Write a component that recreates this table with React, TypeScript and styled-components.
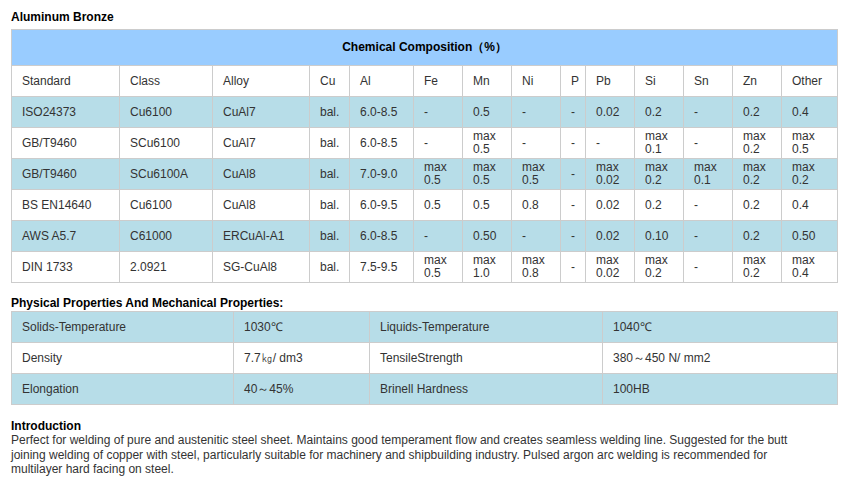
import React from "react";
import styled, { createGlobalStyle } from "styled-components";

const Global = createGlobalStyle`
  html, body { margin: 0; padding: 0; background: #fff; }
  body { font-family: "Liberation Sans", Arial, sans-serif; font-size: 12px; color: #333; }
`;

const Page = styled.div`
  width: 826px;
  padding: 10px 0 0 11px;
`;

const SectionTitle = styled.div<{ $gap?: number; $after?: number }>`
  font-weight: bold;
  color: #000;
  font-size: 12px;
  line-height: 15px;
  margin-top: ${(p) => p.$gap ?? 0}px;
  margin-bottom: ${(p) => p.$after ?? 4}px;
`;

const Table = styled.table`
  width: 826px;
  border-collapse: collapse;
  table-layout: fixed;
  font-size: 12px;
  color: #333;
`;

const Row = styled.tr<{ $shade?: boolean }>`
  background: ${(p) => (p.$shade ? "#b7dde8" : "#ffffff")};
`;

const HeadCell = styled.td`
  background: #99ccff;
  border: 1px solid #cccccc;
  height: 35px;
  padding: 0;
  text-align: center;
  font-weight: bold;
  color: #000;
`;

const Cell = styled.td<{ $h?: number }>`
  border: 1px solid #cccccc;
  height: ${(p) => p.$h ?? 30}px;
  padding: 0 0 0 10px;
  vertical-align: middle;
  line-height: 13px;
  white-space: nowrap;
`;

const Intro = styled.div`
  margin-top: 14px;
  width: 810px;
`;

const IntroTitle = styled.div`
  font-weight: bold;
  color: #000;
  line-height: 14px;
`;

const IntroText = styled.p`
  margin: 0;
  line-height: 14.5px;
  color: #333;
`;

const chemCols = [108, 93, 97, 40, 64, 49, 49, 49, 25, 49, 49, 49, 49, 56];
const chemHead = ["Standard", "Class", "Alloy", "Cu", "Al", "Fe", "Mn", "Ni", "P", "Pb", "Si", "Sn", "Zn", "Other"];
const chemRows: string[][] = [
  ["ISO24373", "Cu6100", "CuAl7", "bal.", "6.0-8.5", "-", "0.5", "-", "-", "0.02", "0.2", "-", "0.2", "0.4"],
  ["GB/T9460", "SCu6100", "CuAl7", "bal.", "6.0-8.5", "-", "max\n0.5", "-", "-", "-", "max\n0.1", "-", "max\n0.2", "max\n0.5"],
  ["GB/T9460", "SCu6100A", "CuAl8", "bal.", "7.0-9.0", "max\n0.5", "max\n0.5", "max\n0.5", "-", "max\n0.02", "max\n0.2", "max\n0.1", "max\n0.2", "max\n0.2"],
  ["BS EN14640", "Cu6100", "CuAl8", "bal.", "6.0-9.5", "0.5", "0.5", "0.8", "-", "0.02", "0.2", "-", "0.2", "0.4"],
  ["AWS A5.7", "C61000", "ERCuAl-A1", "bal.", "6.0-8.5", "-", "0.50", "-", "-", "0.02", "0.10", "-", "0.2", "0.50"],
  ["DIN 1733", "2.0921", "SG-CuAl8", "bal.", "7.5-9.5", "max\n0.5", "max\n1.0", "max\n0.8", "-", "max\n0.02", "max\n0.2", "-", "max\n0.2", "max\n0.4"],
];

const physCols = [222, 136, 233, 235];
const physRows: string[][] = [
  ["Solids-Temperature", "1030℃", "Liquids-Temperature", "1040℃"],
  ["Density", "7.7㎏/ dm3", "TensileStrength", "380～450 N/ mm2"],
  ["Elongation", "40～45%", "Brinell Hardness", "100HB"],
];

const CellText: React.FC<{ text: string }> = ({ text }) => {
  const parts = text.split("\n");
  return (
    <>
      {parts.map((p, i) => (
        <React.Fragment key={i}>
          {i > 0 && <br />}
          {p}
        </React.Fragment>
      ))}
    </>
  );
};

export default function App() {
  return (
    <>
      <Global />
      <Page>
        <SectionTitle>Aluminum Bronze</SectionTitle>
        <Table>
          <colgroup>
            {chemCols.map((w, i) => (
              <col key={i} style={{ width: w }} />
            ))}
          </colgroup>
          <tbody>
            <tr>
              <HeadCell colSpan={14}>Chemical Composition（%）</HeadCell>
            </tr>
            <Row>
              {chemHead.map((h) => (
                <Cell key={h}>{h}</Cell>
              ))}
            </Row>
            {chemRows.map((r, ri) => (
              <Row key={ri} $shade={ri % 2 === 0}>
                {r.map((c, ci) => (
                  <Cell key={ci}>
                    <CellText text={c} />
                  </Cell>
                ))}
              </Row>
            ))}
          </tbody>
        </Table>

        <SectionTitle $gap={13} $after={0}>Physical Properties And Mechanical Properties:</SectionTitle>
        <Table>
          <colgroup>
            {physCols.map((w, i) => (
              <col key={i} style={{ width: w }} />
            ))}
          </colgroup>
          <tbody>
            {physRows.map((r, ri) => (
              <Row key={ri} $shade={ri % 2 === 0}>
                {r.map((c, ci) => (
                  <Cell key={ci}>{c}</Cell>
                ))}
              </Row>
            ))}
          </tbody>
        </Table>

        <Intro>
          <IntroTitle>Introduction</IntroTitle>
          <IntroText>
            Perfect for welding of pure and austenitic steel sheet. Maintains good temperament flow and creates seamless
            welding line. Suggested for the butt joining welding of copper with steel, particularly suitable for
            machinery and shipbuilding industry. Pulsed argon arc welding is recommended for multilayer hard facing on
            steel.
          </IntroText>
        </Intro>
      </Page>
    </>
  );
}
